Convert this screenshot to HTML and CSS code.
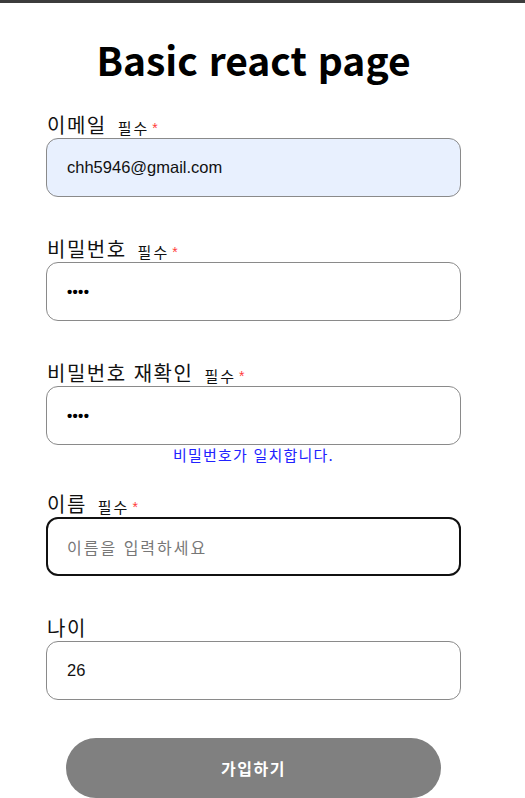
FILE: index.html
```html
<!DOCTYPE html>
<html lang="ko">
<head>
<meta charset="utf-8">
<title>Basic react page</title>
<link rel="stylesheet" href="styles.css">
</head>
<body>
<div class="topbar"></div>
<main class="page">
  <h1 class="title">Basic react page</h1>
  <form class="form">
    <div class="field">
      <label class="label"><span class="label-text">이메일</span><span class="req">필수</span><span class="star">*</span></label>
      <div class="input filled">chh5946@gmail.com</div>
    </div>
    <div class="field">
      <label class="label"><span class="label-text">비밀번호</span><span class="req">필수</span><span class="star">*</span></label>
      <div class="input dots">••••</div>
    </div>
    <div class="field field-msg">
      <label class="label"><span class="label-text">비밀번호 재확인</span><span class="req">필수</span><span class="star">*</span></label>
      <div class="input dots">••••</div>
      <p class="msg">비밀번호가 일치합니다.</p>
    </div>
    <div class="field">
      <label class="label"><span class="label-text">이름</span><span class="req">필수</span><span class="star">*</span></label>
      <div class="input focused placeholder">이름을 입력하세요</div>
    </div>
    <div class="field field-last">
      <label class="label"><span class="label-text">나이</span></label>
      <div class="input">26</div>
    </div>
    <div class="actions">
      <button type="button" class="submit">가입하기</button>
    </div>
  </form>
</main>
</body>
</html>
```

FILE: styles.css
```css
* { box-sizing: border-box; }
html, body {
  margin: 0;
  padding: 0;
  background: #ffffff;
  font-family: "Noto Sans CJK KR", "Noto Sans", sans-serif;
  color: #000;
}
.topbar {
  height: 3px;
  background: #3c3c3c;
}
.page {
  width: 415px;
  margin-left: 46px;
}
.title {
  margin: 0;
  padding-top: 31px;
  height: 110px;
  text-align: center;
  font-size: 39px;
  font-weight: 700;
  line-height: 50px;
}
.form {
  display: flex;
  flex-direction: column;
}
.field {
  display: flex;
  flex-direction: column;
  margin-bottom: 40px;
}
.field-msg { margin-bottom: 27px; }
.field-last { margin-bottom: 38px; }
.label {
  display: flex;
  align-items: flex-end;
  height: 25px;
  padding-bottom: 3px;
  line-height: 1;
}
.label-text {
  font-size: 20px;
  letter-spacing: 1.5px;
  padding-left: 1px;
  color: #111;
}
.req {
  font-size: 15px;
  letter-spacing: 2px;
  margin-left: 11px;
  color: #111;
}
.star {
  font-size: 14px;
  color: #ff3b3b;
  margin-left: 3px;
  font-family: "Liberation Sans", sans-serif;
}
.input {
  height: 59px;
  border: 1px solid #8a8a8a;
  border-radius: 12px;
  padding: 0 20px;
  display: flex;
  align-items: center;
  font-family: "Liberation Sans", Arial, sans-serif;
  font-size: 16.5px;
  color: #111;
  background: #fff;
}
.input.filled { background: #e8f0fe; }
.input.dots {
  font-size: 15px;
  letter-spacing: 0.3px;
  font-weight: 700;
  color: #000;
}
.input.focused {
  border: 2px solid #111;
  padding-left: 19px;
}
.input.placeholder {
  font-family: "Noto Sans CJK KR", sans-serif;
  color: #777;
  font-size: 16px;
  letter-spacing: 2px;
}
.msg {
  margin: 0;
  height: 20px;
  line-height: 20px;
  text-align: center;
  font-size: 15px;
  letter-spacing: 1.2px;
  color: #2222ff;
}
.actions {
  display: flex;
  justify-content: center;
}
.submit {
  width: 375px;
  height: 60px;
  border: none;
  border-radius: 30px;
  background: #808080;
  color: #fff;
  font-family: "Noto Sans CJK KR", sans-serif;
  font-size: 16px;
  letter-spacing: 1.5px;
  font-weight: 700;
}
```
